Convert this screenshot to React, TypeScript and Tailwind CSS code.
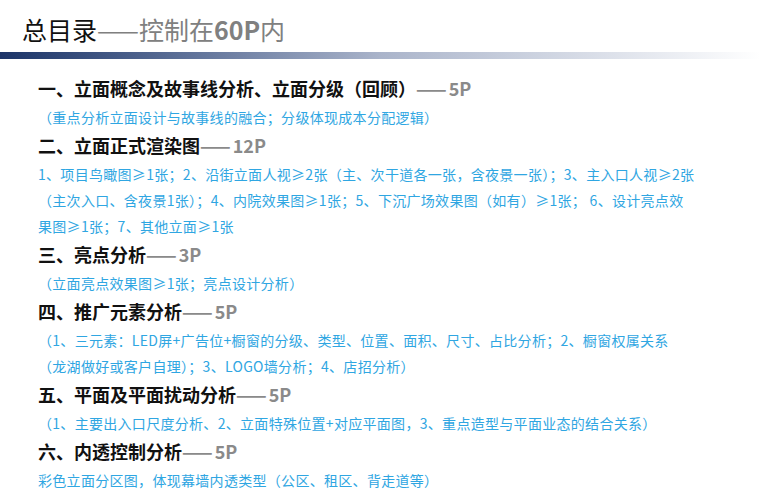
export default function App() {
  const H = ({ t, p }: { t: string; p: string }) => (
    <div className="h-[31px] flex items-center text-[18px] font-bold text-[#111] whitespace-nowrap">
      <span>{t}</span>
      <span className="text-[#8a8a8a] tracking-[2px]">——</span>
      <span className="text-[#8a8a8a]">{p}</span>
    </div>
  );
  const B = ({ lines }: { lines: string[] }) => (
    <div className="text-[14px] text-[#2fa6e2] leading-[26px] whitespace-nowrap tracking-[0.3px]">
      {lines.map((l, i) => (
        <div key={i}>{l}</div>
      ))}
    </div>
  );
  return (
    <div className="w-[760px] h-[500px] bg-white overflow-hidden" style={{ fontFamily: '"Noto Sans CJK SC", "Noto Sans", sans-serif' }}>
      <div className="h-[52px] pl-[22px] pt-[13px] text-[25px] leading-[32px] whitespace-nowrap">
        <span className="text-[#111]">总目录</span>
        <span className="text-[#808080]">——控制在<b>60P</b>内</span>
      </div>
      <div className="h-[7px] bg-gradient-to-r from-[#1c3468] via-[#aab4ca] to-white" />
      <div className="pl-[38px] pt-[14px]">
        <H t="一、立面概念及故事线分析、立面分级（回顾）" p="5P" />
        <B lines={["（重点分析立面设计与故事线的融合；分级体现成本分配逻辑）"]} />
        <H t="二、立面正式渲染图" p="12P" />
        <B lines={["1、项目鸟瞰图≥1张；2、沿街立面人视≥2张（主、次干道各一张，含夜景一张）；3、主入口人视≥2张", "（主次入口、含夜景1张）；4、内院效果图≥1张；5、下沉广场效果图（如有）≥1张； 6、设计亮点效", "果图≥1张；7、其他立面≥1张"]} />
        <H t="三、亮点分析" p="3P" />
        <B lines={["（立面亮点效果图≥1张；亮点设计分析）"]} />
        <H t="四、推广元素分析" p="5P" />
        <B lines={["（1、三元素：LED屏+广告位+橱窗的分级、类型、位置、面积、尺寸、占比分析；2、橱窗权属关系", "（龙湖做好或客户自理）；3、LOGO墙分析；4、店招分析）"]} />
        <H t="五、平面及平面扰动分析" p="5P" />
        <B lines={["（1、主要出入口尺度分析、2、立面特殊位置+对应平面图，3、重点造型与平面业态的结合关系）"]} />
        <H t="六、内透控制分析" p="5P" />
        <B lines={["彩色立面分区图，体现幕墙内透类型（公区、租区、背走道等）"]} />
      </div>
    </div>
  );
}
